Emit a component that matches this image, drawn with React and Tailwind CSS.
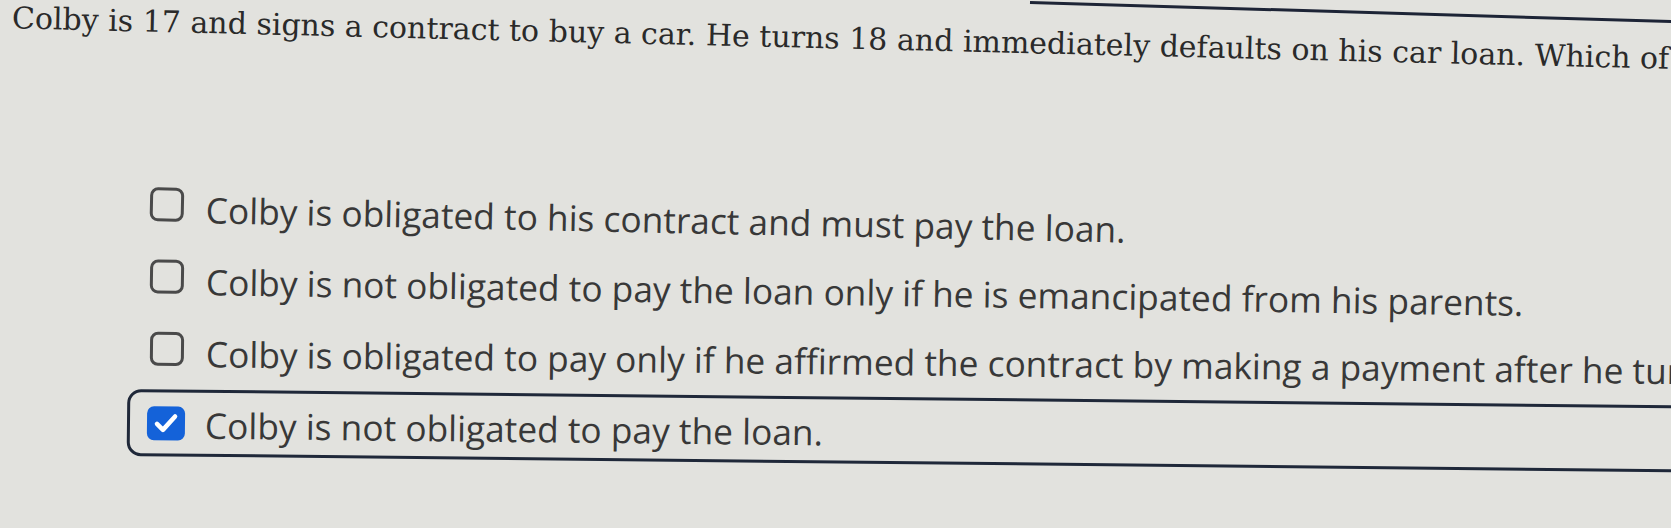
const options = [
  { text: 'Colby is obligated to his contract and must pay the loan.', tilt: 'rotate-[1.2deg]' },
  { text: 'Colby is not obligated to pay the loan only if he is emancipated from his parents.', tilt: 'rotate-[0.9deg]' },
  { text: 'Colby is obligated to pay only if he affirmed the contract by making a payment after he turns 18.', tilt: 'rotate-[0.65deg]' },
]

function EmptyBox() {
  return <span className="shrink-0 w-[34px] h-[34px] rounded-[8px] border-[3px] border-[#4a4a4a]" />
}

function CheckedBox() {
  return (
    <span className="shrink-0 w-[38px] h-[34px] rounded-[7px] bg-[#1462d9] flex items-center justify-center">
      <svg width="26" height="22" viewBox="0 0 26 22" fill="none">
        <path d="M4 11.5l6 6L22 4" stroke="white" strokeWidth="4.5" strokeLinecap="round" strokeLinejoin="round" />
      </svg>
    </span>
  )
}

export default function App() {
  return (
    <div className="w-[1671px] h-[528px] overflow-hidden bg-[#e2e2de] text-[#383838]">
      <div className="h-0">
        <div className="ml-[1030px] w-[800px] h-[3px] bg-[#1d2436] translate-y-[1px] origin-left rotate-[1.7deg]" />
      </div>

      <h1
        className="pl-[12px] text-[30px] leading-[36px] whitespace-nowrap text-[#2a2a2a] origin-left rotate-[1.4deg]"
        style={{ fontFamily: '"DejaVu Serif", serif' }}
      >
        Colby is 17 and signs a contract to buy a car. He turns 18 and immediately defaults on his car loan. Which of the following is true?
      </h1>

      <div className="mt-[128px] flex flex-col" style={{ fontFamily: '"Open Sans", sans-serif' }}>
        {options.map((o) => (
          <label key={o.text} className={`h-[73px] pl-[150px] flex items-center gap-[22px] whitespace-nowrap origin-left ${o.tilt}`}>
            <EmptyBox />
            <span className="text-[35.3px] leading-none pt-[10px]">{o.text}</span>
          </label>
        ))}

        <label className="mt-[6px] ml-[127px] w-[1700px] h-[67px] pl-[17px] flex items-center gap-[20px] whitespace-nowrap rounded-[14px] border-[3px] border-[#1f2839] origin-left rotate-[0.6deg]">
          <CheckedBox />
          <span className="text-[35.3px] leading-none pt-[4px]">Colby is not obligated to pay the loan.</span>
        </label>
      </div>
    </div>
  )
}
